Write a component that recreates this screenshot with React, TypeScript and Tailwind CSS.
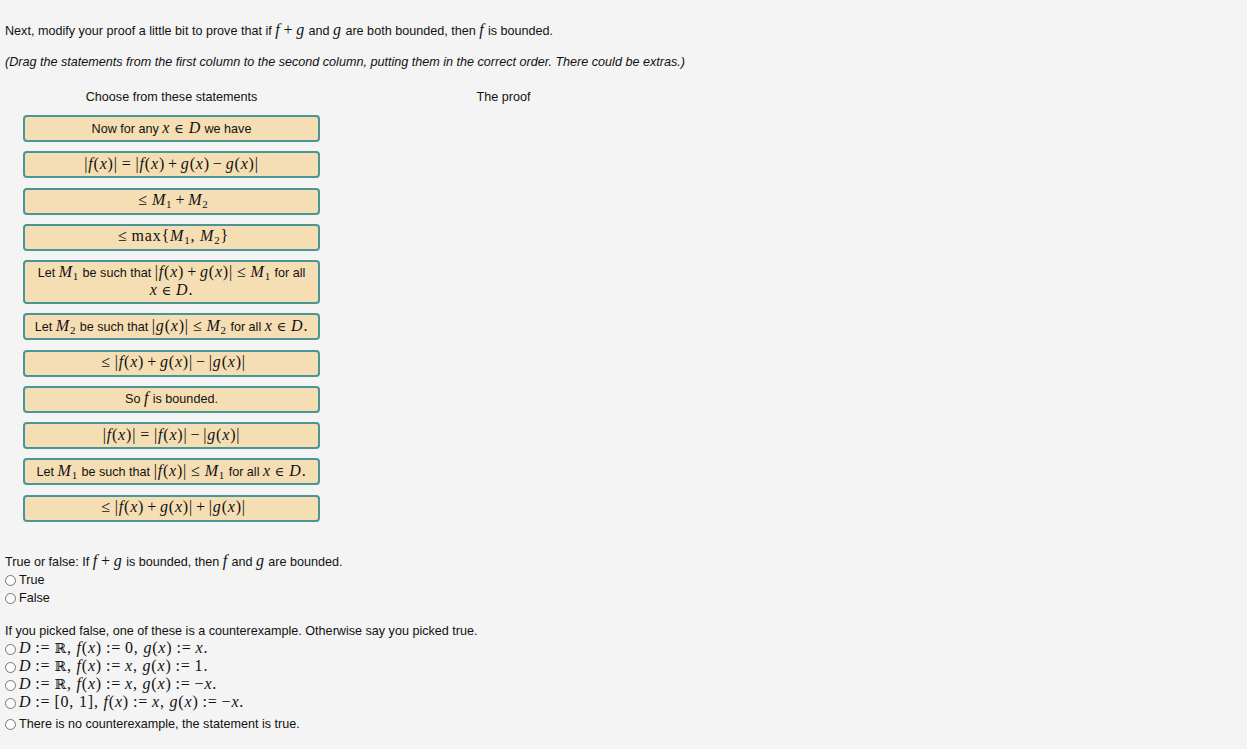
import React from "react";

const V = ({ children }: { children: React.ReactNode }) => (
  <span className="italic">{children}</span>
);
const Op = ({ children }: { children: React.ReactNode }) => (
  <span className="mx-[3px] not-italic">{children}</span>
);
const Rel = ({ children }: { children: React.ReactNode }) => (
  <span className="mx-[4px] not-italic">{children}</span>
);
const In = () => (
  <span className="mx-[4px] not-italic font-['DejaVu_Serif',serif] text-[13px]">∈</span>
);
const Sub = ({ children }: { children: React.ReactNode }) => (
  <span className="text-[11px] not-italic leading-none relative top-[3px]">{children}</span>
);
const M = ({ children }: { children: React.ReactNode }) => (
  <span className="font-['Liberation_Serif',serif] text-[16px] tracking-[0.8px] leading-none">{children}</span>
);

const fx = (
  <>
    <V>f</V>(<V>x</V>)
  </>
);
const gx = (
  <>
    <V>g</V>(<V>x</V>)
  </>
);
const M1 = (
  <>
    <V>M</V>
    <Sub>1</Sub>
  </>
);
const M2 = (
  <>
    <V>M</V>
    <Sub>2</Sub>
  </>
);
const xD = (
  <M>
    <V>x</V>
    <In />
    <V>D</V>
  </M>
);
const xDdot = (
  <M>
    <V>x</V>
    <In />
    <V>D</V>.
  </M>
);

const Card = ({ children, tall = false }: { children: React.ReactNode; tall?: boolean }) => (
  <div
    className={
      "w-[297px] border-2 border-[#4a9696] rounded-[4px] bg-[#f5deb3] px-1 flex items-center justify-center text-center leading-[17px] " +
      (tall ? "h-[44px]" : "h-[27px]")
    }
  >
    <div>{children}</div>
  </div>
);

const Radio = () => (
  <span className="inline-block w-[11px] h-[11px] rounded-full border border-[#767676] bg-[#fbfbfb] mr-[3px] relative top-[1px] shrink-0" />
);

const Row = ({ children, extra = "" }: { children: React.ReactNode; extra?: string }) => (
  <div className={"flex items-center h-[18px] whitespace-nowrap " + extra}>
    <Radio />
    <span>{children}</span>
  </div>
);

const R = () => <span className="font-['DejaVu_Serif',serif] text-[14px]">ℝ</span>;

export default function App() {
  return (
    <div className="min-h-screen bg-[#f4f4f4] text-[#111] font-['Liberation_Sans',Arial,sans-serif] text-[12.6px] px-[5px] pt-[22px]">
      <p className="h-[17px] leading-[17px]">
        Next, modify your proof a little bit to prove that if{" "}
        <M>
          <V>f</V>
          <Op>+</Op>
          <V>g</V>
        </M>{" "}
        and{" "}
        <M>
          <V>g</V>
        </M>{" "}
        are both bounded, then{" "}
        <M>
          <V>f</V>
        </M>{" "}
        is bounded.
      </p>
      <p className="italic mt-[15px] leading-[17px]">
        (Drag the statements from the first column to the second column, putting them in the correct order. There could be
        extras.)
      </p>

      <div className="flex gap-[35px] ml-[18px] mt-[18px]">
        <div className="flex flex-col">
          <div className="text-center w-[297px] leading-[17px] mb-[9px]">Choose from these statements</div>
          <div className="flex flex-col gap-[9.25px]">
            <Card>Now for any {xD} we have</Card>
            <Card>
              <M>
                |{fx}|<Rel>=</Rel>|{fx}
                <Op>+</Op>
                {gx}
                <Op>−</Op>
                {gx}|
              </M>
            </Card>
            <Card>
              <M>
                <Rel>≤</Rel>
                {M1}
                <Op>+</Op>
                {M2}
              </M>
            </Card>
            <Card>
              <M>
                <Rel>≤</Rel>max{"{"}
                {M1}, {M2}
                {"}"}
              </M>
            </Card>
            <Card tall>
              Let <M>{M1}</M> be such that{" "}
              <M>
                |{fx}
                <Op>+</Op>
                {gx}|<Rel>≤</Rel>
                {M1}
              </M>{" "}
              for all
              <br />
              {xDdot}
            </Card>
            <Card>
              <span className="whitespace-nowrap">
                Let <M>{M2}</M> be such that{" "}
                <M>
                  |{gx}|<Rel>≤</Rel>
                  {M2}
                </M>{" "}
                for all {xDdot}
              </span>
            </Card>
            <Card>
              <M>
                <Rel>≤</Rel>|{fx}
                <Op>+</Op>
                {gx}|<Op>−</Op>|{gx}|
              </M>
            </Card>
            <Card>
              So{" "}
              <M>
                <V>f</V>
              </M>{" "}
              is bounded.
            </Card>
            <Card>
              <M>
                |{fx}|<Rel>=</Rel>|{fx}|<Op>−</Op>|{gx}|
              </M>
            </Card>
            <Card>
              <span className="whitespace-nowrap">
                Let <M>{M1}</M> be such that{" "}
                <M>
                  |{fx}|<Rel>≤</Rel>
                  {M1}
                </M>{" "}
                for all {xDdot}
              </span>
            </Card>
            <Card>
              <M>
                <Rel>≤</Rel>|{fx}
                <Op>+</Op>
                {gx}|<Op>+</Op>|{gx}|
              </M>
            </Card>
          </div>
        </div>
        <div className="flex flex-col">
          <div className="text-center w-[297px] leading-[17px]">The proof</div>
        </div>
      </div>

      <div className="mt-[31px] leading-[18px]">
        <div className="h-[18px]">
          True or false: If{" "}
          <M>
            <V>f</V>
            <Op>+</Op>
            <V>g</V>
          </M>{" "}
          is bounded, then{" "}
          <M>
            <V>f</V>
          </M>{" "}
          and{" "}
          <M>
            <V>g</V>
          </M>{" "}
          are bounded.
        </div>
        <Row>True</Row>
        <Row>False</Row>
      </div>

      <div className="mt-[15px] leading-[18px]">
        <div className="h-[18px]">If you picked false, one of these is a counterexample. Otherwise say you picked true.</div>
        <Row>
          <M>
            <V>D</V>
            <Rel>:=</Rel>
            <R />, {fx}
            <Rel>:=</Rel>0, {gx}
            <Rel>:=</Rel>
            <V>x</V>.
          </M>
        </Row>
        <Row>
          <M>
            <V>D</V>
            <Rel>:=</Rel>
            <R />, {fx}
            <Rel>:=</Rel>
            <V>x</V>, {gx}
            <Rel>:=</Rel>1.
          </M>
        </Row>
        <Row>
          <M>
            <V>D</V>
            <Rel>:=</Rel>
            <R />, {fx}
            <Rel>:=</Rel>
            <V>x</V>, {gx}
            <Rel>:=</Rel>−<V>x</V>.
          </M>
        </Row>
        <Row>
          <M>
            <V>D</V>
            <Rel>:=</Rel>[0, 1], {fx}
            <Rel>:=</Rel>
            <V>x</V>, {gx}
            <Rel>:=</Rel>−<V>x</V>.
          </M>
        </Row>
        <Row extra="mt-[3px]">There is no counterexample, the statement is true.</Row>
      </div>
    </div>
  );
}
